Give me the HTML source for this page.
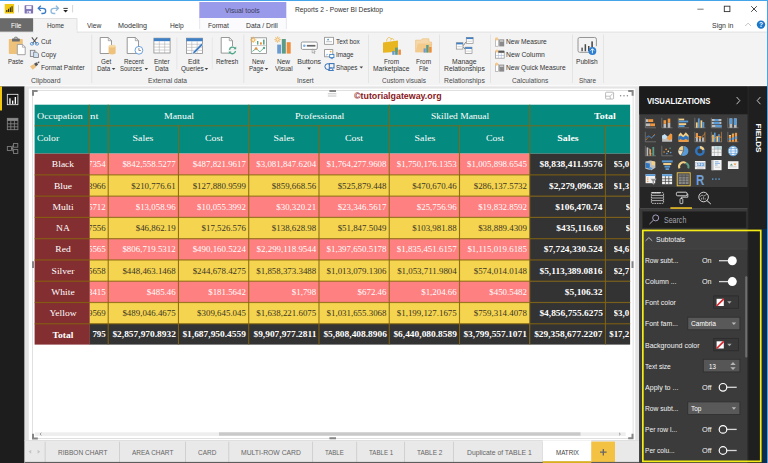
<!DOCTYPE html>
<html lang="en"><head><meta charset="utf-8"><title>Reports 2 - Power BI Desktop</title>
<style>
html,body{margin:0;padding:0}
body{width:768px;height:463px;overflow:hidden;background:#fff;position:relative;font-family:"Liberation Sans",sans-serif}
.r{position:absolute;display:block}
.t{position:absolute;white-space:nowrap;display:block}
.s{font-family:"Liberation Sans",sans-serif}
.f{font-family:"Liberation Serif",serif}
.d{font-family:"DejaVu Sans","Liberation Sans",sans-serif}
</style></head><body>
<svg class="r" style="left:0;top:0" width="768" height="463" viewBox="0 0 768 463"><rect x="0.00" y="0.00" width="768.00" height="463.00" fill="#ffffff"/><rect x="0.00" y="0.00" width="768.00" height="1.00" fill="#45a4ea"/><rect x="199.30" y="2.00" width="87.00" height="16.00" fill="#9a9aea"/><rect x="199.30" y="18.00" width="87.30" height="14.00" fill="#fbfbfe"/><rect x="199.30" y="18.00" width="0.80" height="11.00" fill="#e1e1e8"/><rect x="285.90" y="18.00" width="0.80" height="11.00" fill="#e1e1e8"/><rect x="0.00" y="18.20" width="33.00" height="13.80" fill="#6a6a6a"/><rect x="0.00" y="32.00" width="767.00" height="55.00" fill="#f3f3f4"/><rect x="0.00" y="31.60" width="767.00" height="0.90" fill="#dedede"/><rect x="33.40" y="18.60" width="43.60" height="13.60" fill="#f3f3f4" stroke="#dadada" stroke-width="0.8"/><rect x="33.60" y="30.00" width="43.20" height="3.00" fill="#f3f3f4"/><rect x="0.00" y="85.00" width="767.00" height="1.60" fill="#fafafa"/><rect x="91.30" y="34.50" width="0.90" height="48.50" fill="#e1e2e3"/><rect x="243.40" y="34.50" width="0.90" height="48.50" fill="#e1e2e3"/><rect x="368.00" y="34.50" width="0.90" height="48.50" fill="#e1e2e3"/><rect x="439.00" y="34.50" width="0.90" height="48.50" fill="#e1e2e3"/><rect x="490.00" y="34.50" width="0.90" height="48.50" fill="#e1e2e3"/><rect x="572.00" y="34.50" width="0.90" height="48.50" fill="#e1e2e3"/><rect x="603.00" y="34.50" width="0.90" height="48.50" fill="#e1e2e3"/><rect x="176.40" y="37.50" width="0.90" height="32.00" fill="#e4e5e6"/><rect x="211.80" y="37.50" width="0.90" height="32.00" fill="#e4e5e6"/><rect x="4.7" y="4" width="9.4" height="9.5" fill="#f2c811"/><rect x="6.3" y="10.0" width="1.1" height="2.0" fill="#2e2a10"/><rect x="8.0" y="8.8" width="1.1" height="3.2" fill="#2e2a10"/><rect x="9.8" y="7.4" width="1.1" height="4.6" fill="#2e2a10"/><rect x="11.5" y="6.2" width="1.1" height="5.8" fill="#2e2a10"/><path d="M18.5 5v7.4M72.6 5v7.4" stroke="#c9c9c9" stroke-width="0.8"/><rect x="24.6" y="5.2" width="8.5" height="8.3" rx="0.6" fill="#7d70b4"/><rect x="26.2" y="5.9" width="5.3" height="3.2" fill="#f4f2fb"/><rect x="26.8" y="10.9" width="4.1" height="2.6" fill="#e9e6f5"/><rect x="27.6" y="11.4" width="1.2" height="1.6" fill="#7d70b4"/><path d="M40.8 5.7L38.2 8.3L40.8 10.9M38.4 8.3h4.3a3 2.6 0 0 1 0 5.2h-1.3" fill="none" stroke="#3b7bc6" stroke-width="1.3"/><path d="M55.9 5.7L58.5 8.3L55.9 10.9M58.3 8.3h-4.3a3 2.6 0 0 0 0 5.2h1.3" fill="none" stroke="#8fb9da" stroke-width="1.3"/><path d="M63.4 8.4h4.4" stroke="#222" stroke-width="0.9"/><path d="M63.3 9.9h4.6l-2.3 2.5z" fill="#222"/><path d="M697.4 9.2h6.2" stroke="#777" stroke-width="1"/><rect x="724.3" y="6.2" width="5.6" height="5.4" fill="none" stroke="#333" stroke-width="0.9"/><path d="M751.2 6.2l5.6 5.6M756.8 6.2l-5.6 5.6" stroke="#333" stroke-width="0.9"/><path d="M745.2 26l2.9-2.9l2.9 2.9" fill="none" stroke="#bdbdbd" stroke-width="0.9"/><circle cx="761" cy="24.6" r="4.2" fill="#1b77c9"/><path d="M111.8 67.9h3.6l-1.8 2.1z" fill="#444"/><path d="M144.5 67.9h3.6l-1.8 2.1z" fill="#444"/><path d="M204.6 67.9h3.6l-1.8 2.1z" fill="#444"/><path d="M264.7 67.9h3.6l-1.8 2.1z" fill="#444"/><path d="M307.3 67.6h3.6l-1.8 2.1z" fill="#444"/><path d="M359.5 66.4h3.6l-1.8 2.1z" fill="#444"/><rect x="8.8" y="39" width="14" height="15" rx="0.8" fill="#efc27c"/><rect x="12" y="38.6" width="7.8" height="2.9" rx="0.6" fill="#6b6b6b"/><path d="M14.2 38.6a1.7 1.5 0 0 1 3.4 0" fill="none" stroke="#6b6b6b" stroke-width="0.9"/><path d="M17.3 44.4h5.3l2.6 2.6v7.7h-7.9z" fill="#fff" stroke="#9a9a9a" stroke-width="0.9"/><path d="M22.4 44.4v2.8h2.8" fill="none" stroke="#9a9a9a" stroke-width="0.7"/><path d="M31.8 37.3l4.8 6.2M37.3 37.3l-4.8 6.2" stroke="#555" stroke-width="1.1" fill="none"/><ellipse cx="32" cy="43.8" rx="1.7" ry="1.3" fill="none" stroke="#4a8bd0" stroke-width="0.9"/><ellipse cx="37" cy="43.8" rx="1.7" ry="1.3" fill="none" stroke="#4a8bd0" stroke-width="0.9"/><rect x="30.3" y="50.3" width="4.6" height="6.2" fill="#dfeaf6" stroke="#7a7a7a" stroke-width="0.8"/><path d="M33.6 52.2h3.2l1.7 1.7v3.6h-4.9z" fill="#cfe1f4" stroke="#7a7a7a" stroke-width="0.8"/><path d="M30 66.3l4-2.2l2 3l-3.3 2.6z" fill="#efc27c"/><path d="M34 63.8l2.6-1.5l1.6 2.3l-2.3 1.8z" fill="#555"/><path d="M37.7 63l1.6-1.2" stroke="#555" stroke-width="1.2"/><path d="M100.2 37.5h8.100000000000001l3.2 3.2v12.8h-11.3z" fill="#fff" stroke="#8c8c8c" stroke-width="0.9"/><path d="M108.3 37.5v3.2h3.2" fill="none" stroke="#8c8c8c" stroke-width="0.7"/><path d="M108.6 46.2v6.8a3.5 1.4 0 0 0 7 0v-6.8z" fill="#efc27c"/><ellipse cx="112.1" cy="46.2" rx="3.5" ry="1.4" fill="#f7d9a6"/><path d="M127.2 37.5h8.100000000000001l3.2 3.2v12.8h-11.3z" fill="#fff" stroke="#8c8c8c" stroke-width="0.9"/><path d="M135.3 37.5v3.2h3.2" fill="none" stroke="#8c8c8c" stroke-width="0.7"/><circle cx="138.9" cy="50.3" r="3.9" fill="#fff" stroke="#5b95d6" stroke-width="0.9"/><path d="M138.9 48v2.5h2" fill="none" stroke="#666" stroke-width="0.7"/><rect x="153.9" y="38.2" width="16.2" height="14.8" fill="#fff" stroke="#8c8c8c" stroke-width="0.8"/><rect x="153.9" y="38.2" width="16.2" height="2.96" fill="#3f7fc4"/><path d="M159.30 41.16v11.84" stroke="#b0b0b0" stroke-width="0.6"/><path d="M164.70 41.16v11.84" stroke="#b0b0b0" stroke-width="0.6"/><path d="M153.9 44.12h16.2" stroke="#b0b0b0" stroke-width="0.6"/><path d="M153.9 47.08h16.2" stroke="#b0b0b0" stroke-width="0.6"/><path d="M153.9 50.04h16.2" stroke="#b0b0b0" stroke-width="0.6"/><rect x="186.4" y="38.2" width="16.2" height="15.2" fill="#fff" stroke="#8c8c8c" stroke-width="0.8"/><rect x="186.4" y="38.2" width="16.2" height="3.04" fill="#3f7fc4"/><path d="M191.80 41.24v12.16" stroke="#b0b0b0" stroke-width="0.6"/><path d="M197.20 41.24v12.16" stroke="#b0b0b0" stroke-width="0.6"/><path d="M186.4 44.28h16.2" stroke="#b0b0b0" stroke-width="0.6"/><path d="M186.4 47.32h16.2" stroke="#b0b0b0" stroke-width="0.6"/><path d="M186.4 50.36h16.2" stroke="#b0b0b0" stroke-width="0.6"/><path d="M192.2 54.3l1-2.6l8.2-8.4l1.6 1.6l-8.2 8.4z" fill="#3f7fc4" stroke="#f3f3f4" stroke-width="0.5"/><path d="M221.2 37.5h8.100000000000001l3.2 3.2v12.399999999999999h-11.3z" fill="#fff" stroke="#8c8c8c" stroke-width="0.9"/><path d="M229.3 37.5v3.2h3.2" fill="none" stroke="#8c8c8c" stroke-width="0.7"/><circle cx="232.5" cy="50.4" r="4.3" fill="#f3f3f4"/><path d="M229.5 49.8a3.1 3.1 0 0 1 5.6 -1.4M235.5 51a3.1 3.1 0 0 1 -5.6 1.4" fill="none" stroke="#4ea585" stroke-width="1.3"/><path d="M236.2 46.6v2.6h-2.6zM228.8 54.2v-2.6h2.6z" fill="#4ea585"/><rect x="251.3" y="37.8" width="15.2" height="15.6" fill="#fff" stroke="#8c8c8c" stroke-width="0.8"/><path d="M251.3 45.6h15.2" stroke="#aaa" stroke-width="0.6"/><rect x="257" y="41" width="1.4" height="3.6" fill="#5aa88a"/><rect x="260" y="42.3" width="1.8" height="2.3" fill="#ee8e3c"/><rect x="263" y="39.6" width="1.6" height="5" fill="#5aa88a"/><path d="M252.3 51.5l3.8-3l3.8 3.4l4-4" fill="none" stroke="#5aa88a" stroke-width="0.9"/><circle cx="256.1" cy="48.6" r="1.3" fill="#ee8e3c"/><circle cx="264" cy="48" r="1.2" fill="#5aa88a"/><circle cx="253.2" cy="39.9" r="1.7" fill="#fbe9c8" stroke="#e9a73f" stroke-width="0.8"/><path d="M250.0 39.9h1M255.39999999999998 39.9h1M253.2 36.699999999999996v1M253.2 42.1v1M250.89999999999998 37.6l0.7 0.7M254.79999999999998 41.5l0.7 0.7M250.89999999999998 42.199999999999996l0.7 -0.7M254.79999999999998 38.3l0.7 -0.7" stroke="#e9a73f" stroke-width="0.7"/><rect x="277.2" y="44.6" width="3.8" height="9" fill="#6c9bd2"/><rect x="281.8" y="39" width="4" height="14.6" fill="#5a9c85"/><rect x="286.7" y="42.2" width="4" height="11.4" fill="#ee8e3c"/><circle cx="277.6" cy="39.6" r="1.7" fill="#fbe9c8" stroke="#e9a73f" stroke-width="0.8"/><path d="M274.40000000000003 39.6h1M279.8 39.6h1M277.6 36.4v1M277.6 41.800000000000004v1M275.3 37.300000000000004l0.7 0.7M279.20000000000005 41.2l0.7 0.7M275.3 41.9l0.7 -0.7M279.20000000000005 38.0l0.7 -0.7" stroke="#e9a73f" stroke-width="0.7"/><rect x="301.3" y="42" width="16" height="7.4" rx="1.3" fill="#fff" stroke="#8c8c8c" stroke-width="0.9"/><circle cx="304.3" cy="45.7" r="1.3" fill="#7fb0e4"/><rect x="306.8" y="44.9" width="8.6" height="1.7" fill="#666"/><path d="M312.2 49l0 4l1-0.9l0.9 1.6l0.8-0.5l-0.9-1.5l1.3-0.2z" fill="#fff" stroke="#777" stroke-width="0.5"/><rect x="324.6" y="37.3" width="8.8" height="7" fill="#fff" stroke="#8c8c8c" stroke-width="0.8"/><path d="M326 41.7h6" stroke="#999" stroke-width="0.6"/><path d="M326.8 40.2l1.3-1.6l1.3 1.6z" fill="#3f7fc4"/><rect x="324.6" y="49.6" width="8.2" height="7.2" fill="#fff" stroke="#8c8c8c" stroke-width="0.8"/><circle cx="330.6" cy="51.6" r="0.9" fill="#efb24a"/><path d="M325.4 55.8l1.6-2.4l1.4 1.4" fill="#9fc3e8"/><rect x="329.7" y="54.4" width="4.2" height="3.2" fill="#fff" stroke="#3f7fc4" stroke-width="0.9"/><path d="M330.6 58.6h2.5" stroke="#3f7fc4" stroke-width="0.8"/><circle cx="327.8" cy="66.6" r="2.9" fill="none" stroke="#2f6db5" stroke-width="1"/><rect x="329.3" y="63.6" width="4.7" height="4.4" fill="#f3f3f4" stroke="#2f6db5" stroke-width="1"/><path d="M328.5 70.5l2.5-3l2.6 3z" fill="#f3f3f4" stroke="#2f6db5" stroke-width="0.9"/><path d="M386.6 41.5c0-3.6 2.4-4.6 3.8-3.6c1 0.8 0.8 2 0.2 2.6M391 38.8c1.6-0.6 2.8 0.2 3 1.6" fill="none" stroke="#e8b93a" stroke-width="0.8"/><path d="M383 42.6l15-2v11.2l-15 1z" fill="#e7b621"/><rect x="392.2" y="51" width="2.4" height="3.8" fill="#6c9bd2"/><rect x="395.1" y="47.6" width="2.7" height="7.2" fill="#5a9c85"/><rect x="398.3" y="49.6" width="2.6" height="5.2" fill="#ee8e3c"/><path d="M415.6 40.2h5.5l1.2-1.4h6.6v3.2h2.6v10h-15.9z" fill="#f6d9ab" stroke="#efc27c" stroke-width="0.7"/><path d="M415.7 52l2-8.4h14.6l-2 8.4z" fill="#f3c98c"/><rect x="423.6" y="48.4" width="2.2" height="4.2" fill="#6c9bd2"/><rect x="426.2" y="45" width="2.4" height="7.6" fill="#5a9c85"/><rect x="429.1" y="47" width="2.4" height="5.6" fill="#ee8e3c"/><path d="M463 45.8l3.6-4.4M463 46.6l2.6 3.2" stroke="#666" stroke-width="0.8"/><rect x="456.3" y="42.7" width="6.6" height="6.4" fill="#fff" stroke="#8c8c8c" stroke-width="0.7"/><rect x="456.3" y="42.7" width="6.6" height="1.7" fill="#3f7fc4"/><path d="M457.3 46.67h4.6" stroke="#aaa" stroke-width="0.5"/><rect x="466.3" y="37.4" width="6.8" height="6.2" fill="#fff" stroke="#8c8c8c" stroke-width="0.7"/><rect x="466.3" y="37.4" width="6.8" height="1.7" fill="#3f7fc4"/><path d="M467.3 41.24h4.8" stroke="#aaa" stroke-width="0.5"/><rect x="465.2" y="47.2" width="6.8" height="6.4" fill="#fff" stroke="#8c8c8c" stroke-width="0.7"/><rect x="465.2" y="47.2" width="6.8" height="1.7" fill="#3f7fc4"/><path d="M466.2 51.17h4.8" stroke="#aaa" stroke-width="0.5"/><rect x="495.6" y="39.2" width="3" height="7" fill="#fff" stroke="#999" stroke-width="0.6"/><rect x="499.2" y="39.4" width="5" height="7" fill="#8a8a8a"/><rect x="500" y="40.2" width="3.4" height="1.6" fill="#c9c9c9"/><circle cx="496.6" cy="38.9" r="1.6" fill="#f6c98a"/><rect x="495.6" y="64.4" width="3" height="7" fill="#fff" stroke="#999" stroke-width="0.6"/><rect x="499.2" y="64.60000000000001" width="5" height="7" fill="#8a8a8a"/><rect x="500" y="65.4" width="3.4" height="1.6" fill="#c9c9c9"/><circle cx="496.6" cy="64.10000000000001" r="1.6" fill="#f6c98a"/><rect x="495.6" y="51.4" width="8.6" height="6.8" fill="#fff" stroke="#8c8c8c" stroke-width="0.7"/><rect x="498.2" y="50.6" width="6" height="2.2" fill="#555"/><path d="M498.4 53v5M501.3 53v5M495.6 55.5h8.6" stroke="#9ac" stroke-width="0.5"/><circle cx="496.8" cy="51" r="1.6" fill="#f6c98a"/><path d="M590 52.3h-10.3a1.7 1.7 0 0 1-1.7-1.7v-11.4a1.7 1.7 0 0 1 1.7-1.7h15a1.7 1.7 0 0 1 1.7 1.7v7" fill="none" stroke="#8a8a8a" stroke-width="0.9"/><rect x="581.4" y="47.6" width="1.4" height="3.6" fill="#4a4a4a"/><rect x="584.6" y="44.2" width="1.5" height="7" fill="#4a4a4a"/><rect x="588" y="46" width="1.5" height="5.2" fill="#4a4a4a"/><rect x="591.3" y="41.4" width="1.6" height="6" fill="#4a4a4a"/><circle cx="592.4" cy="51" r="3.9" fill="#2f7fd0"/><path d="M592.4 53.3v-4.3M590.6 50.6l1.8-1.9l1.8 1.9" fill="none" stroke="#fff" stroke-width="0.9"/><rect x="0.00" y="86.40" width="24.60" height="376.60" fill="#1d1d1d"/><rect x="0.00" y="86.40" width="2.00" height="24.10" fill="#f2c811"/><rect x="24.60" y="86.50" width="614.70" height="353.50" fill="#e4e4e4"/><rect x="28.80" y="88.60" width="606.40" height="351.40" fill="#ffffff"/><rect x="32.40" y="90.40" width="600.70" height="348.20" fill="#ffffff" stroke="#d9d9d9" stroke-width="0.8"/><rect x="34.60" y="104.70" width="595.50" height="48.90" fill="#048a7e"/><rect x="89.30" y="153.60" width="440.46" height="21.57" fill="#fe8080"/><rect x="529.76" y="153.60" width="100.34" height="21.57" fill="#333333"/><rect x="89.30" y="174.87" width="440.46" height="21.57" fill="#f5d44f"/><rect x="529.76" y="174.87" width="100.34" height="21.57" fill="#333333"/><rect x="89.30" y="196.14" width="440.46" height="21.57" fill="#fe8080"/><rect x="529.76" y="196.14" width="100.34" height="21.57" fill="#333333"/><rect x="89.30" y="217.41" width="440.46" height="21.57" fill="#f5d44f"/><rect x="529.76" y="217.41" width="100.34" height="21.57" fill="#333333"/><rect x="89.30" y="238.68" width="440.46" height="21.57" fill="#fe8080"/><rect x="529.76" y="238.68" width="100.34" height="21.57" fill="#333333"/><rect x="89.30" y="259.95" width="440.46" height="21.57" fill="#f5d44f"/><rect x="529.76" y="259.95" width="100.34" height="21.57" fill="#333333"/><rect x="89.30" y="281.22" width="440.46" height="21.57" fill="#fe8080"/><rect x="529.76" y="281.22" width="100.34" height="21.57" fill="#333333"/><rect x="89.30" y="302.49" width="440.46" height="21.57" fill="#f5d44f"/><rect x="529.76" y="302.49" width="100.34" height="21.57" fill="#333333"/><rect x="89.30" y="323.76" width="440.46" height="20.84" fill="#333333"/><rect x="529.76" y="323.76" width="100.34" height="20.84" fill="#333333"/><rect x="34.60" y="153.60" width="55.10" height="191.00" fill="#832e30"/><rect x="88.75" y="104.70" width="1.10" height="48.90" fill="#86650f" opacity="0.9"/><rect x="107.65" y="104.70" width="1.10" height="239.90" fill="#86650f" opacity="0.9"/><rect x="177.91" y="125.75" width="1.10" height="218.85" fill="#86650f" opacity="0.9"/><rect x="248.17" y="104.70" width="1.10" height="239.90" fill="#86650f" opacity="0.9"/><rect x="318.43" y="125.75" width="1.10" height="218.85" fill="#86650f" opacity="0.9"/><rect x="388.69" y="104.70" width="1.10" height="239.90" fill="#86650f" opacity="0.9"/><rect x="458.95" y="125.75" width="1.10" height="218.85" fill="#86650f" opacity="0.9"/><rect x="529.21" y="104.70" width="1.10" height="239.90" fill="#86650f" opacity="0.9"/><rect x="604.85" y="125.75" width="1.10" height="218.85" fill="#86650f" opacity="0.9"/><rect x="34.60" y="125.15" width="595.50" height="1.20" fill="#86650f" opacity="0.7"/><rect x="34.60" y="174.27" width="595.50" height="1.20" fill="#86650f" opacity="0.8"/><rect x="34.60" y="195.54" width="595.50" height="1.20" fill="#86650f" opacity="0.8"/><rect x="34.60" y="216.81" width="595.50" height="1.20" fill="#86650f" opacity="0.8"/><rect x="34.60" y="238.08" width="595.50" height="1.20" fill="#86650f" opacity="0.8"/><rect x="34.60" y="259.35" width="595.50" height="1.20" fill="#86650f" opacity="0.8"/><rect x="34.60" y="280.62" width="595.50" height="1.20" fill="#86650f" opacity="0.8"/><rect x="34.60" y="301.89" width="595.50" height="1.20" fill="#86650f" opacity="0.8"/><rect x="34.60" y="323.16" width="595.50" height="1.20" fill="#86650f" opacity="0.8"/><rect x="34.70" y="432.30" width="591.00" height="3.60" fill="#eeeeee"/><rect x="219.00" y="432.30" width="361.50" height="3.40" fill="#c9c9c9"/><rect x="24.60" y="440.00" width="614.70" height="23.00" fill="#e9e9e9"/><rect x="24.60" y="440.00" width="614.70" height="0.80" fill="#dcdcdc"/><rect x="44.70" y="441.70" width="0.90" height="21.30" fill="#cdcdcd"/><rect x="119.05" y="441.70" width="0.90" height="21.30" fill="#cdcdcd"/><rect x="185.05" y="441.70" width="0.90" height="21.30" fill="#cdcdcd"/><rect x="228.35" y="441.70" width="0.90" height="21.30" fill="#cdcdcd"/><rect x="312.15" y="441.70" width="0.90" height="21.30" fill="#cdcdcd"/><rect x="356.25" y="441.70" width="0.90" height="21.30" fill="#cdcdcd"/><rect x="404.15" y="441.70" width="0.90" height="21.30" fill="#cdcdcd"/><rect x="452.95" y="441.70" width="0.90" height="21.30" fill="#cdcdcd"/><rect x="542.15" y="441.70" width="0.90" height="21.30" fill="#cdcdcd"/><rect x="542.70" y="440.40" width="48.60" height="22.60" fill="#ffffff"/><rect x="591.30" y="441.60" width="23.70" height="21.40" fill="#f4c243"/><rect x="24.60" y="461.90" width="614.70" height="1.10" fill="#5c5c5c"/><rect x="542.70" y="461.20" width="48.60" height="1.80" fill="#d9ae1f"/><rect x="7.3" y="94.3" width="10.6" height="10.4" fill="none" stroke="#f5f5f5" stroke-width="0.8"/><rect x="8" y="95" width="9.2" height="1.6" fill="#111"/><rect x="9.3" y="98.3" width="1.3" height="5.6" fill="#fff"/><rect x="12" y="100.6" width="1.3" height="3.3" fill="#fff"/><rect x="14.7" y="97" width="1.3" height="6.9" fill="#fff"/><rect x="7.3" y="118.3" width="10.6" height="11.4" fill="none" stroke="#8a8a8a" stroke-width="0.8"/><rect x="7.3" y="118.3" width="10.6" height="2.6" fill="#8a8a8a"/><path d="M10.8 120.9v8.8M14.4 120.9v8.8M7.3 123.8h10.6M7.3 126.8h10.6" stroke="#8a8a8a" stroke-width="0.8"/><rect x="7.3" y="146.6" width="4.2" height="3.8" fill="none" stroke="#8a8a8a" stroke-width="0.8"/><rect x="13.4" y="143.6" width="4.4" height="3.6" fill="none" stroke="#8a8a8a" stroke-width="0.8"/><rect x="13.4" y="149.6" width="4.4" height="3.8" fill="none" stroke="#8a8a8a" stroke-width="0.8"/><path d="M11.5 148.5h1.9M12.5 145.4v6" stroke="#8a8a8a" stroke-width="0.7" fill="none"/><path d="M33 95.8V91H37.6M628.2 91H632.6V95.8M33 433.8V438.4H37.8M628.2 438.3H632.5V433.8" fill="none" stroke="#858585" stroke-width="2"/><path d="M329.4 91h6.6M329.4 438.3h6.6M33 261.3v6.6M632.5 261.3v6.6" stroke="#858585" stroke-width="2"/><path d="M327.8 93.8h8.6M327.8 96h8.6" stroke="#b5b5b5" stroke-width="0.8"/><rect x="605.6" y="92.2" width="8" height="6.8" rx="0.8" fill="none" stroke="#a8a8a8" stroke-width="0.8"/><path d="M605.6 96.2h4.6v2.8M610.4 96l2.2-2.4" fill="none" stroke="#a8a8a8" stroke-width="0.7"/><circle cx="620.6" cy="95.8" r="0.75" fill="#888"/><circle cx="624" cy="95.8" r="0.75" fill="#888"/><circle cx="627.4" cy="95.8" r="0.75" fill="#888"/><path d="M41.4 432.8l-1.4 1.3l1.4 1.3M619 432.8l1.4 1.3l-1.4 1.3" fill="none" stroke="#777" stroke-width="0.7"/><path d="M31.2 449.8l-2.6 2l2.6 2zM37.6 449.8l2.6 2l-2.6 2z" fill="#c4c4c4"/><path d="M600 452.2h6.6M603.3 448.9v6.6" stroke="#666" stroke-width="1.3"/><rect x="639.30" y="86.40" width="128.00" height="376.60" fill="#1f1f1f"/><rect x="639.30" y="86.40" width="108.40" height="28.00" fill="#1c1c1c"/><rect x="640.00" y="114.30" width="107.70" height="72.70" fill="#3c3c3c"/><rect x="640.00" y="187.00" width="107.70" height="21.30" fill="#252525"/><rect x="639.30" y="208.30" width="108.40" height="254.70" fill="#3b3b3b"/><rect x="640.00" y="208.00" width="107.70" height="0.90" fill="#4a4a4a"/><rect x="670.40" y="207.20" width="21.60" height="1.70" fill="#e3b825"/><rect x="642.60" y="211.60" width="103.60" height="16.40" fill="#1e1e1e" stroke="#2a2a2a" stroke-width="0.6"/><rect x="639.30" y="230.00" width="108.40" height="18.70" fill="#404040"/><rect x="639.30" y="248.60" width="108.40" height="0.80" fill="#4a4a4a"/><rect x="719.00" y="260.05" width="14.00" height="1.30" fill="#d8d8d8"/><circle cx="732.3" cy="260.70" r="4.5" fill="#fff"/><rect x="719.00" y="280.95" width="14.00" height="1.30" fill="#d8d8d8"/><circle cx="732.3" cy="281.60" r="4.5" fill="#fff"/><rect x="713.70" y="295.90" width="24.80" height="12.40" fill="#383838" stroke="#2b2b2b" stroke-width="0.8"/><rect x="716.60" y="298.80" width="7.20" height="7.20" fill="#fff"/><path d="M716.6 306.00L723.8 298.80" fill="none" stroke="#d8262c" stroke-width="1.7" /><path d="M727.2 301.20h4.4l-2.2 2.6z" fill="#aaa" /><rect x="687.80" y="317.20" width="52.10" height="12.60" fill="#595959" stroke="#2e2e2e" stroke-width="0.8"/><path d="M731.7 322.50h4.4l-2.2 2.6z" fill="#bbb" /><rect x="713.70" y="338.40" width="24.80" height="12.40" fill="#383838" stroke="#2b2b2b" stroke-width="0.8"/><rect x="716.60" y="341.30" width="7.20" height="7.20" fill="#fff"/><path d="M716.6 348.50L723.8 341.30" fill="none" stroke="#d8262c" stroke-width="1.7" /><path d="M727.2 343.70h4.4l-2.2 2.6z" fill="#aaa" /><rect x="703.30" y="359.30" width="36.60" height="12.60" fill="#565656" stroke="#2e2e2e" stroke-width="0.8"/><path d="M730.3 364.90l2.7 -2.8l2.7 2.8z M730.3 367.30l2.7 2.8l2.7 -2.8z" fill="#b4b4b4" /><rect x="723.00" y="386.65" width="13.70" height="1.30" fill="#d8d8d8"/><circle cx="723" cy="387.30" r="3.8" fill="#3b3b3b" stroke="#fff" stroke-width="1.2"/><rect x="687.80" y="401.90" width="52.10" height="12.60" fill="#595959" stroke="#2e2e2e" stroke-width="0.8"/><path d="M731.7 407.20h4.4l-2.2 2.6z" fill="#bbb" /><rect x="723.00" y="428.75" width="13.70" height="1.30" fill="#d8d8d8"/><circle cx="723" cy="429.40" r="3.8" fill="#3b3b3b" stroke="#fff" stroke-width="1.2"/><rect x="723.00" y="449.85" width="13.70" height="1.30" fill="#d8d8d8"/><circle cx="723" cy="450.50" r="3.8" fill="#3b3b3b" stroke="#fff" stroke-width="1.2"/><rect x="745.20" y="276.30" width="2.30" height="81.30" fill="#6e6e6e" rx="1"/><rect x="747.70" y="86.40" width="1.00" height="376.60" fill="#2b2b2b"/><rect x="748.70" y="86.40" width="18.50" height="376.60" fill="#1f1f1f"/><rect x="761.50" y="229.00" width="5.70" height="234.00" fill="#0d2d4d"/><path d="M645.3 117.8v10h10.7" fill="none" stroke="#8a8a8a" stroke-width="0.6"/><rect x="645.80" y="119.20" width="2.40" height="2.80" fill="#bdbdbd"/><rect x="648.20" y="119.20" width="5.00" height="2.80" fill="#f0963c"/><rect x="645.80" y="123.40" width="4.40" height="2.80" fill="#bdbdbd"/><rect x="650.20" y="123.40" width="4.80" height="2.80" fill="#f0963c"/><path d="M661.8 117.8v10h10.7" fill="none" stroke="#8a8a8a" stroke-width="0.6"/><rect x="663.50" y="123.80" width="2.60" height="4.00" fill="#bdbdbd"/><rect x="663.50" y="120.20" width="2.60" height="3.60" fill="#f0963c"/><rect x="667.70" y="122.80" width="2.60" height="5.00" fill="#bdbdbd"/><rect x="667.70" y="118.60" width="2.60" height="4.20" fill="#f0963c"/><path d="M678.3 117.8v10h10.7" fill="none" stroke="#8a8a8a" stroke-width="0.6"/><rect x="678.80" y="118.60" width="5.40" height="1.80" fill="#f3cf85"/><rect x="678.80" y="120.60" width="9.40" height="1.80" fill="#5b9bd5"/><rect x="678.80" y="123.20" width="7.40" height="1.80" fill="#f3cf85"/><rect x="678.80" y="125.20" width="5.80" height="1.80" fill="#5b9bd5"/><path d="M694.8 117.8v10h10.7" fill="none" stroke="#8a8a8a" stroke-width="0.6"/><rect x="695.90" y="122.40" width="1.80" height="5.40" fill="#f3cf85"/><rect x="697.90" y="118.40" width="1.80" height="9.40" fill="#5b9bd5"/><rect x="700.50" y="120.40" width="1.80" height="7.40" fill="#f3cf85"/><rect x="702.50" y="122.00" width="1.80" height="5.80" fill="#5b9bd5"/><path d="M711.3 117.8v10h10.7" fill="none" stroke="#8a8a8a" stroke-width="0.6"/><rect x="711.80" y="119.00" width="9.60" height="2.20" fill="#bdbdbd"/><rect x="714.60" y="119.00" width="4.00" height="2.20" fill="#5b9bd5"/><rect x="711.80" y="122.00" width="9.60" height="2.20" fill="#bdbdbd"/><rect x="713.60" y="122.00" width="6.00" height="2.20" fill="#5b9bd5"/><rect x="711.80" y="125.00" width="9.60" height="2.20" fill="#bdbdbd"/><rect x="715.20" y="125.00" width="6.20" height="2.20" fill="#5b9bd5"/><path d="M727.8 117.8v10h10.7" fill="none" stroke="#8a8a8a" stroke-width="0.6"/><rect x="729.50" y="118.40" width="2.80" height="9.40" fill="#bdbdbd"/><rect x="729.50" y="118.40" width="2.80" height="5.60" fill="#5b9bd5"/><rect x="733.90" y="118.40" width="2.80" height="9.40" fill="#bdbdbd"/><rect x="733.90" y="118.40" width="2.80" height="6.60" fill="#5b9bd5"/><path d="M645.3 131.8v10h10.7" fill="none" stroke="#8a8a8a" stroke-width="0.6"/><path d="M646 139.8l3-3.4l2.4 1.6l3.6-4" fill="none" stroke="#f0963c" stroke-width="0.9" stroke-dasharray="1.2 0.5"/><path d="M646 137.4l2.6-1.6l3 2l3.4-2.6" fill="none" stroke="#2f75c0" stroke-width="0.9"/><path d="M662.1 141.8v-6l2.6-1.6l3 2.6l3-3.4l1.4 1v7.4z" fill="#bdbdbd"/><path d="M662.1 135.8l2.6-1.6l3 2.6l-2 2.2l-3.6-0.6z" fill="#bfe0f5"/><path d="M667.7 136.8l3-3.4l1.4 1v4.6l-3 1.4l-2.4-2.4z" fill="#f0963c"/><path d="M678.6 141.8v-7l2-2.2l2.6 2.6l2.6-3l2.8 3v6.6z" fill="#f3cf85"/><path d="M678.6 140.20000000000002v-3.4l2-1.4l2.6 1.8l2.6-2l2.8 2v3z" fill="#2f75c0"/><path d="M678.6 141.8v-1.6l2-1.2l2.6 1.4l2.6-1.6l2.8 1.6v1.4z" fill="#f0963c"/><rect x="695.90" y="133.20" width="2.00" height="8.60" fill="#bdbdbd"/><rect x="695.90" y="133.20" width="2.00" height="4.00" fill="#f0963c"/><rect x="698.90" y="136.20" width="2.00" height="5.60" fill="#bdbdbd"/><rect x="698.90" y="136.20" width="2.00" height="2.60" fill="#f0963c"/><rect x="702.10" y="137.40" width="1.80" height="4.40" fill="#bdbdbd"/><path d="M694.9 137.8l3-1.6l3 1.4l4.2-4" fill="none" stroke="#f0963c" stroke-width="0.7"/><path d="M704.9 131.8v10" stroke="#f0963c" stroke-width="0.6"/><path d="M694.8 131.8v10h10.7" fill="none" stroke="#8a8a8a" stroke-width="0.6"/><path d="M711.3 131.8v10h10.7" fill="none" stroke="#8a8a8a" stroke-width="0.6"/><rect x="712.20" y="134.80" width="1.60" height="7.00" fill="#f3cf85"/><rect x="714.00" y="132.60" width="1.60" height="9.20" fill="#5b9bd5"/><rect x="716.40" y="136.20" width="1.60" height="5.60" fill="#f3cf85"/><rect x="718.20" y="134.20" width="1.60" height="7.60" fill="#5b9bd5"/><path d="M711.4 136.8l3.4 1.4l3-2l3.6 1.2" fill="none" stroke="#f0963c" stroke-width="0.7"/><path d="M721.4 131.8v10" stroke="#f0963c" stroke-width="0.6"/><path d="M727.8 131.8v10h10.7" fill="none" stroke="#8a8a8a" stroke-width="0.6"/><rect x="728.90" y="135.80" width="2.20" height="6.00" fill="#f0963c"/><rect x="728.90" y="138.20" width="2.20" height="2.00" fill="#5b9bd5"/><rect x="731.90" y="134.40" width="2.20" height="7.40" fill="#f0963c"/><rect x="731.90" y="137.40" width="2.20" height="2.40" fill="#5b9bd5"/><rect x="734.90" y="132.80" width="2.20" height="9.00" fill="#f0963c"/><rect x="734.90" y="136.40" width="2.20" height="2.60" fill="#5b9bd5"/><rect x="728.90" y="135.00" width="2.20" height="1.00" fill="#f3cf85"/><rect x="731.90" y="133.60" width="2.20" height="1.00" fill="#f3cf85"/><path d="M645.3 145.8v10h10.7" fill="none" stroke="#8a8a8a" stroke-width="0.6"/><rect x="646.60" y="147.40" width="1.60" height="8.40" fill="#bdbdbd"/><rect x="652.40" y="147.00" width="1.80" height="8.80" fill="#5a9c85"/><rect x="649.60" y="149.20" width="1.50" height="6.60" fill="#f0963c"/><path d="M648.2 148.8h1.4v5h2.8" fill="none" stroke="#bdbdbd" stroke-width="0.5"/><path d="M661.8 145.8v10h10.7" fill="none" stroke="#8a8a8a" stroke-width="0.6"/><circle cx="664.1" cy="152.0" r="0.8" fill="#f0963c"/><circle cx="666.1" cy="149.4" r="0.8" fill="#f0963c"/><circle cx="668.3" cy="151.4" r="0.8" fill="#f3cf85"/><circle cx="670.1" cy="148.20000000000002" r="0.8" fill="#5a9c85"/><circle cx="670.7" cy="152.60000000000002" r="0.8" fill="#5b9bd5"/><circle cx="666.9" cy="153.60000000000002" r="0.8" fill="#5b9bd5"/><circle cx="683.4" cy="151.0" r="5" fill="#5b9bd5"/><path d="M683.4 151.0v-5a5 5 0 0 0 -4.9 4z" fill="#f3cf85"/><path d="M683.4 151.0l-4.9 -1a5 5 0 0 0 2.4 5.4z" fill="#f7e3bd"/><path d="M683.4 146.0v5l-2.5 4.4M683.4 151.0l-4.9-1" stroke="#3c3c3c" stroke-width="0.5" fill="none"/><circle cx="699.9" cy="151.0" r="3.7" fill="none" stroke="#2f75c0" stroke-width="2.4"/><path d="M699.9 147.3a3.7 3.7 0 0 1 3.5 2.6" fill="none" stroke="#f3cf85" stroke-width="2.4"/><rect x="711.60" y="146.20" width="10.00" height="9.80" fill="#f2f2f2"/><rect x="714.40" y="146.20" width="7.20" height="3.00" fill="#b9dbe0"/><path d="M714.4 146.20000000000002v9.8M718 146.20000000000002v9.8M711.6 149.20000000000002h10M711.6 152.4h10" stroke="#9a9a9a" stroke-width="0.5"/><circle cx="733.1" cy="151.0" r="4.8" fill="#f5f9ff" stroke="#5b9bd5" stroke-width="0.9"/><ellipse cx="733.1" cy="151.0" rx="2.2" ry="4.8" fill="none" stroke="#5b9bd5" stroke-width="0.7"/><path d="M728.3 151.0h9.6M729.1 148.60000000000002h8M729.1 153.4h8" stroke="#5b9bd5" stroke-width="0.7"/><path d="M645.4 161.4l5-1l5 1.4v6l-4 2.4l-6-1.4z" fill="#bdbdbd"/><path d="M645.4 162.8l4.4 0.6v5l-4-0.6z" fill="#2f75c0"/><path d="M651.4 160.8l3.6 1v4l-3.2-1z" fill="#f3cf85"/><path d="M649.6 166.8l3 1.4l-2 1.8l-2.4-0.8z" fill="#5b9bd5"/><rect x="661.90" y="160.40" width="10.80" height="2.00" fill="#5b9bd5"/><rect x="663.30" y="163.00" width="8.00" height="2.00" fill="#f3cf85"/><rect x="664.50" y="165.60" width="5.60" height="2.00" fill="#5b9bd5"/><rect x="665.50" y="168.20" width="3.60" height="1.80" fill="#5b9bd5"/><path d="M679.4 168.4a4.4 4.4 0 0 1 6.4 -5.4" fill="none" stroke="#f3cf85" stroke-width="2"/><path d="M685.8 163.0a4.4 4.4 0 0 1 2.4 5.4" fill="none" stroke="#5a9c85" stroke-width="2"/><rect x="694.90" y="161.00" width="10.60" height="8.20" fill="#f2f2f2"/><rect x="695.8" y="162.20000000000002" width="8.8" height="4.6" fill="#e4eefb" stroke="#9ab" stroke-width="0.4"/><path d="M696.9 168.10000000000002h6.6" stroke="#999" stroke-width="0.5"/><text x="700.2" y="166.20000000000002" font-family="Liberation Sans, sans-serif" font-size="4.4" font-weight="700" fill="#2f75c0" text-anchor="middle">123</text><rect x="711.60" y="160.00" width="10.00" height="10.20" fill="#f4f4f4"/><rect x="711.60" y="160.00" width="2.00" height="10.20" fill="#bdbdbd"/><path d="M715 161.8h3.6M715 163.4h5M715 165.0h2.6" stroke="#5b9bd5" stroke-width="0.7"/><path d="M715 167.20000000000002h5" stroke="#aaa" stroke-width="0.5"/><rect x="727.90" y="161.20" width="10.60" height="7.80" fill="#f2f2f2"/><path d="M729.9 165.4l1.5-2l1.5 2z" fill="#5a9c85"/><path d="M733.5 163.4h3l-1.5 2z" fill="#f0963c"/><path d="M729.5 166.8h7" stroke="#aaa" stroke-width="0.5"/><rect x="645.60" y="174.20" width="9.60" height="9.00" fill="#f2f2f2"/><rect x="645.60" y="174.20" width="9.60" height="1.80" fill="#5b9bd5"/><path d="M647 178.0h1.4M647 179.8h1.4M647 181.60000000000002h1.4" stroke="#f0963c" stroke-width="0.9"/><path d="M650.4 178.8h5.8l-2.2 2.6v3l-1.4-0.8v-2.2z" fill="#8c8c8c" stroke="#f2f2f2" stroke-width="0.3"/><rect x="662.10" y="174.20" width="10.00" height="10.00" fill="#f4f4f4"/><rect x="662.10" y="174.20" width="10.00" height="2.00" fill="#5b9bd5"/><path d="M665.4 176.20000000000002v8M668.8 176.20000000000002v8M662.1 178.8h10M662.1 181.4h10" stroke="#3c3c3c" stroke-width="0.7"/><rect x="677.2" y="172.8" width="13" height="13" fill="#4a4a4a" stroke="#f2c94c" stroke-width="0.9"/><rect x="678.80" y="174.60" width="9.80" height="9.40" fill="#8a8a8a"/><rect x="678.80" y="174.60" width="9.80" height="2.00" fill="#6f6f6f"/><path d="M682 174.60000000000002v9.4M685.4 174.60000000000002v9.4M678.8 179.0h9.8M678.8 181.60000000000002h9.8M678.8 176.60000000000002h9.8" stroke="#4a4a4a" stroke-width="0.6"/><text x="696.1" y="184.70000000000002" font-family="Liberation Sans, sans-serif" font-size="13.8" font-weight="700" fill="#6f9fd8" textLength="8.3" lengthAdjust="spacingAndGlyphs">R</text><rect x="712.0" y="178.4" width="1.4" height="1.4" fill="#5b9bd5"/><rect x="715.2" y="178.4" width="1.4" height="1.4" fill="#5b9bd5"/><rect x="718.4" y="178.4" width="1.4" height="1.4" fill="#5b9bd5"/><rect x="651.4" y="192.6" width="12.2" height="10.8" rx="0.8" fill="none" stroke="#e6e6e6" stroke-width="0.8" stroke-dasharray="1.6 0.8"/><path d="M651.4 195.4h12.2M651.4 198h12.2M651.4 200.6h12.2" stroke="#e6e6e6" stroke-width="0.7"/><rect x="651.4" y="192.2" width="9" height="1.2" fill="#e6e6e6"/><rect x="676.4" y="192.2" width="10.6" height="3.6" rx="1.2" fill="none" stroke="#e6e6e6" stroke-width="0.9"/><path d="M687 194h0.8v3.2h-6.4v1.6" fill="none" stroke="#e6e6e6" stroke-width="0.8"/><rect x="680" y="198.6" width="2.8" height="5" rx="0.6" fill="none" stroke="#e6e6e6" stroke-width="0.8"/><circle cx="703.6" cy="197" r="4.8" fill="none" stroke="#e6e6e6" stroke-width="0.9"/><path d="M707 200.6l3.8 3.4" stroke="#e6e6e6" stroke-width="1"/><path d="M701.6 199.6v-1.8M703.4 199.6v-2.6M705.2 199.6v-1.4M700 196.6l2-1.6l1.8 1.2l3-2" fill="none" stroke="#e6e6e6" stroke-width="0.6"/><circle cx="655.7" cy="217.9" r="3" fill="none" stroke="#b4acd2" stroke-width="0.9"/><path d="M653.5 220.1l-4 3.9" stroke="#b4a0b4" stroke-width="1"/><path d="M645.6 240.8l3.3-3.2l3.3 3.2" fill="none" stroke="#d9d9d9" stroke-width="0.8"/><path d="M736.6 97l3.2 3.6l-3.2 3.6M760.4 97l-3.2 3.6l3.2 3.6" fill="none" stroke="#d6d6d6" stroke-width="0.9"/><rect x="642.85" y="230.45" width="117.90" height="230.90" fill="none" stroke="#f4ec16" stroke-width="1.7"/><rect x="767.00" y="0.00" width="1.00" height="463.00" fill="#45a4ea"/></svg>
<span class="t s" style="top:21px;font-size:6.6px;line-height:8px;color:#fff;font-weight:700;left:761px;transform:translateX(-50%);transform-origin:center center;">?</span>
<span class="t s" style="top:448px;font-size:7.3px;line-height:9px;color:#444;left:555.7px;transform:scaleX(0.8509);transform-origin:left center;">MATRIX</span>
<span class="t s" style="top:91px;font-size:9px;line-height:11px;color:#8a151a;font-weight:700;left:353.9px;transform:scaleX(0.9844);transform-origin:left center;">©tutorialgateway.org</span>
<span class="t f" style="top:111px;font-size:9.2px;line-height:11px;color:#fff;left:37px;transform:scaleX(1.0765);transform-origin:left center;">Occupation</span>
<span class="t f" style="top:133px;font-size:9.2px;line-height:11px;color:#fff;left:37px;transform:scaleX(1.0603);transform-origin:left center;">Color</span>
<span class="t f" style="top:111px;font-size:9.2px;line-height:11px;color:#fff;left:90.4px;transform:scaleX(1.1738);transform-origin:left center;">nt</span>
<span class="t f" style="top:111px;font-size:9.2px;line-height:11px;color:#fff;left:164px;transform:scaleX(1.0684);transform-origin:left center;">Manual</span>
<span class="t f" style="top:111px;font-size:9.2px;line-height:11px;color:#fff;left:294.5px;transform:scaleX(1.0876);transform-origin:left center;">Professional</span>
<span class="t f" style="top:111px;font-size:9.2px;line-height:11px;color:#fff;left:430.6px;transform:scaleX(1.0318);transform-origin:left center;">Skilled Manual</span>
<span class="t f" style="top:111px;font-size:9.2px;line-height:11px;color:#fff;font-weight:700;left:594.3px;transform:scaleX(1.0849);transform-origin:left center;">Total</span>
<span class="t f" style="top:133px;font-size:9.2px;line-height:11px;color:#fff;left:143.2px;transform:translateX(-50%) scaleX(1.07);transform-origin:center center;">Sales</span>
<span class="t f" style="top:133px;font-size:9.2px;line-height:11px;color:#fff;left:284px;transform:translateX(-50%) scaleX(1.07);transform-origin:center center;">Sales</span>
<span class="t f" style="top:133px;font-size:9.2px;line-height:11px;color:#fff;left:424.8px;transform:translateX(-50%) scaleX(1.07);transform-origin:center center;">Sales</span>
<span class="t f" style="top:133px;font-size:9.2px;line-height:11px;color:#fff;left:213.8px;transform:translateX(-50%) scaleX(1.07);transform-origin:center center;">Cost</span>
<span class="t f" style="top:133px;font-size:9.2px;line-height:11px;color:#fff;left:354.3px;transform:translateX(-50%) scaleX(1.07);transform-origin:center center;">Cost</span>
<span class="t f" style="top:133px;font-size:9.2px;line-height:11px;color:#fff;left:495px;transform:translateX(-50%) scaleX(1.07);transform-origin:center center;">Cost</span>
<span class="t f" style="top:133px;font-size:9.2px;line-height:11px;color:#fff;font-weight:700;left:567.7px;transform:translateX(-50%) scaleX(1.07);transform-origin:center center;">Sales</span>
<span class="t f" style="top:159px;font-size:9.2px;line-height:11px;color:#fff;left:62.9px;transform:translateX(-50%) scaleX(1.04);transform-origin:center center;">Black</span>
<span class="t f" style="top:159px;font-size:8.9px;line-height:11px;color:#fff;right:662.30px;width:15.8px;overflow:hidden;direction:rtl;">7354</span>
<span class="t f" style="top:159px;font-size:8.9px;line-height:11px;color:#fff;right:592.34px;">$842,558.5277</span>
<span class="t f" style="top:159px;font-size:8.9px;line-height:11px;color:#fff;right:522.08px;">$487,821.9617</span>
<span class="t f" style="top:159px;font-size:8.9px;line-height:11px;color:#fff;right:451.82px;">$3,081,847.6204</span>
<span class="t f" style="top:159px;font-size:8.9px;line-height:11px;color:#fff;right:381.56px;">$1,764,277.9608</span>
<span class="t f" style="top:159px;font-size:8.9px;line-height:11px;color:#fff;right:311.30px;">$1,750,176.1353</span>
<span class="t f" style="top:159px;font-size:8.9px;line-height:11px;color:#fff;right:241.04px;">$1,005,898.6545</span>
<span class="t f" style="top:159px;font-size:8.9px;line-height:11px;color:#fff;font-weight:700;right:165.40px;transform:scaleX(1.06);transform-origin:right center;">$8,838,411.9576</span>
<span class="t f" style="top:159px;font-size:8.9px;line-height:11px;color:#fff;font-weight:700;left:613.6px;width:16.5px;overflow:hidden;">$5,0</span>
<span class="t f" style="top:181px;font-size:9.2px;line-height:11px;color:#fff;left:62.9px;transform:translateX(-50%) scaleX(1.04);transform-origin:center center;">Blue</span>
<span class="t f" style="top:181px;font-size:8.9px;line-height:11px;color:#3a3526;right:662.30px;width:15.8px;overflow:hidden;direction:rtl;">3966</span>
<span class="t f" style="top:181px;font-size:8.9px;line-height:11px;color:#3a3526;right:592.34px;">$210,776.61</span>
<span class="t f" style="top:181px;font-size:8.9px;line-height:11px;color:#3a3526;right:522.08px;">$127,880.9599</span>
<span class="t f" style="top:181px;font-size:8.9px;line-height:11px;color:#3a3526;right:451.82px;">$859,668.56</span>
<span class="t f" style="top:181px;font-size:8.9px;line-height:11px;color:#3a3526;right:381.56px;">$525,879.448</span>
<span class="t f" style="top:181px;font-size:8.9px;line-height:11px;color:#3a3526;right:311.30px;">$470,670.46</span>
<span class="t f" style="top:181px;font-size:8.9px;line-height:11px;color:#3a3526;right:241.04px;">$286,137.5732</span>
<span class="t f" style="top:181px;font-size:8.9px;line-height:11px;color:#fff;font-weight:700;right:165.40px;transform:scaleX(1.06);transform-origin:right center;">$2,279,096.28</span>
<span class="t f" style="top:181px;font-size:8.9px;line-height:11px;color:#fff;font-weight:700;left:613.6px;width:16.5px;overflow:hidden;">$1,3</span>
<span class="t f" style="top:202px;font-size:9.2px;line-height:11px;color:#fff;left:62.9px;transform:translateX(-50%) scaleX(1.04);transform-origin:center center;">Multi</span>
<span class="t f" style="top:202px;font-size:8.9px;line-height:11px;color:#fff;right:662.30px;width:15.8px;overflow:hidden;direction:rtl;">5712</span>
<span class="t f" style="top:202px;font-size:8.9px;line-height:11px;color:#fff;right:592.34px;">$13,058.96</span>
<span class="t f" style="top:202px;font-size:8.9px;line-height:11px;color:#fff;right:522.08px;">$10,055.3992</span>
<span class="t f" style="top:202px;font-size:8.9px;line-height:11px;color:#fff;right:451.82px;">$30,320.21</span>
<span class="t f" style="top:202px;font-size:8.9px;line-height:11px;color:#fff;right:381.56px;">$23,346.5617</span>
<span class="t f" style="top:202px;font-size:8.9px;line-height:11px;color:#fff;right:311.30px;">$25,756.96</span>
<span class="t f" style="top:202px;font-size:8.9px;line-height:11px;color:#fff;right:241.04px;">$19,832.8592</span>
<span class="t f" style="top:202px;font-size:8.9px;line-height:11px;color:#fff;font-weight:700;right:165.40px;transform:scaleX(1.06);transform-origin:right center;">$106,470.74</span>
<span class="t f" style="top:202px;font-size:8.9px;line-height:11px;color:#fff;font-weight:700;left:625.6px;width:4.5px;overflow:hidden;">$</span>
<span class="t f" style="top:223px;font-size:9.2px;line-height:11px;color:#fff;left:62.9px;transform:translateX(-50%) scaleX(1.04);transform-origin:center center;">NA</span>
<span class="t f" style="top:223px;font-size:8.9px;line-height:11px;color:#3a3526;right:662.30px;width:15.8px;overflow:hidden;direction:rtl;">7556</span>
<span class="t f" style="top:223px;font-size:8.9px;line-height:11px;color:#3a3526;right:592.34px;">$46,862.19</span>
<span class="t f" style="top:223px;font-size:8.9px;line-height:11px;color:#3a3526;right:522.08px;">$17,526.576</span>
<span class="t f" style="top:223px;font-size:8.9px;line-height:11px;color:#3a3526;right:451.82px;">$138,628.98</span>
<span class="t f" style="top:223px;font-size:8.9px;line-height:11px;color:#3a3526;right:381.56px;">$51,847.5049</span>
<span class="t f" style="top:223px;font-size:8.9px;line-height:11px;color:#3a3526;right:311.30px;">$103,981.88</span>
<span class="t f" style="top:223px;font-size:8.9px;line-height:11px;color:#3a3526;right:241.04px;">$38,889.4309</span>
<span class="t f" style="top:223px;font-size:8.9px;line-height:11px;color:#fff;font-weight:700;right:165.40px;transform:scaleX(1.06);transform-origin:right center;">$435,116.69</span>
<span class="t f" style="top:223px;font-size:8.9px;line-height:11px;color:#fff;font-weight:700;left:625.6px;width:4.5px;overflow:hidden;">$</span>
<span class="t f" style="top:244px;font-size:9.2px;line-height:11px;color:#fff;left:62.9px;transform:translateX(-50%) scaleX(1.04);transform-origin:center center;">Red</span>
<span class="t f" style="top:244px;font-size:8.9px;line-height:11px;color:#fff;right:662.30px;width:15.8px;overflow:hidden;direction:rtl;">5565</span>
<span class="t f" style="top:244px;font-size:8.9px;line-height:11px;color:#fff;right:592.34px;">$806,719.5312</span>
<span class="t f" style="top:244px;font-size:8.9px;line-height:11px;color:#fff;right:522.08px;">$490,160.5224</span>
<span class="t f" style="top:244px;font-size:8.9px;line-height:11px;color:#fff;right:451.82px;">$2,299,118.9544</span>
<span class="t f" style="top:244px;font-size:8.9px;line-height:11px;color:#fff;right:381.56px;">$1,397,650.5178</span>
<span class="t f" style="top:244px;font-size:8.9px;line-height:11px;color:#fff;right:311.30px;">$1,835,451.6157</span>
<span class="t f" style="top:244px;font-size:8.9px;line-height:11px;color:#fff;right:241.04px;">$1,115,019.6185</span>
<span class="t f" style="top:244px;font-size:8.9px;line-height:11px;color:#fff;font-weight:700;right:165.40px;transform:scaleX(1.06);transform-origin:right center;">$7,724,330.524</span>
<span class="t f" style="top:244px;font-size:8.9px;line-height:11px;color:#fff;font-weight:700;left:613.6px;width:16.5px;overflow:hidden;">$4,6</span>
<span class="t f" style="top:266px;font-size:9.2px;line-height:11px;color:#fff;left:62.9px;transform:translateX(-50%) scaleX(1.04);transform-origin:center center;">Silver</span>
<span class="t f" style="top:266px;font-size:8.9px;line-height:11px;color:#3a3526;right:662.30px;width:15.8px;overflow:hidden;direction:rtl;">5658</span>
<span class="t f" style="top:266px;font-size:8.9px;line-height:11px;color:#3a3526;right:592.34px;">$448,463.1468</span>
<span class="t f" style="top:266px;font-size:8.9px;line-height:11px;color:#3a3526;right:522.08px;">$244,678.4275</span>
<span class="t f" style="top:266px;font-size:8.9px;line-height:11px;color:#3a3526;right:451.82px;">$1,858,373.3488</span>
<span class="t f" style="top:266px;font-size:8.9px;line-height:11px;color:#3a3526;right:381.56px;">$1,013,079.1306</span>
<span class="t f" style="top:266px;font-size:8.9px;line-height:11px;color:#3a3526;right:311.30px;">$1,053,711.9804</span>
<span class="t f" style="top:266px;font-size:8.9px;line-height:11px;color:#3a3526;right:241.04px;">$574,014.0148</span>
<span class="t f" style="top:266px;font-size:8.9px;line-height:11px;color:#fff;font-weight:700;right:165.40px;transform:scaleX(1.06);transform-origin:right center;">$5,113,389.0816</span>
<span class="t f" style="top:266px;font-size:8.9px;line-height:11px;color:#fff;font-weight:700;left:613.6px;width:16.5px;overflow:hidden;">$2,7</span>
<span class="t f" style="top:287px;font-size:9.2px;line-height:11px;color:#fff;left:62.9px;transform:translateX(-50%) scaleX(1.04);transform-origin:center center;">White</span>
<span class="t f" style="top:287px;font-size:8.9px;line-height:11px;color:#fff;right:662.30px;width:15.8px;overflow:hidden;direction:rtl;">3415</span>
<span class="t f" style="top:287px;font-size:8.9px;line-height:11px;color:#fff;right:592.34px;">$485.46</span>
<span class="t f" style="top:287px;font-size:8.9px;line-height:11px;color:#fff;right:522.08px;">$181.5642</span>
<span class="t f" style="top:287px;font-size:8.9px;line-height:11px;color:#fff;right:451.82px;">$1,798</span>
<span class="t f" style="top:287px;font-size:8.9px;line-height:11px;color:#fff;right:381.56px;">$672.46</span>
<span class="t f" style="top:287px;font-size:8.9px;line-height:11px;color:#fff;right:311.30px;">$1,204.66</span>
<span class="t f" style="top:287px;font-size:8.9px;line-height:11px;color:#fff;right:241.04px;">$450.5482</span>
<span class="t f" style="top:287px;font-size:8.9px;line-height:11px;color:#fff;font-weight:700;right:165.40px;transform:scaleX(1.06);transform-origin:right center;">$5,106.32</span>
<span class="t f" style="top:308px;font-size:9.2px;line-height:11px;color:#fff;left:62.9px;transform:translateX(-50%) scaleX(1.04);transform-origin:center center;">Yellow</span>
<span class="t f" style="top:308px;font-size:8.9px;line-height:11px;color:#3a3526;right:662.30px;width:15.8px;overflow:hidden;direction:rtl;">9569</span>
<span class="t f" style="top:308px;font-size:8.9px;line-height:11px;color:#3a3526;right:592.34px;">$489,046.4675</span>
<span class="t f" style="top:308px;font-size:8.9px;line-height:11px;color:#3a3526;right:522.08px;">$309,645.045</span>
<span class="t f" style="top:308px;font-size:8.9px;line-height:11px;color:#3a3526;right:451.82px;">$1,638,221.6075</span>
<span class="t f" style="top:308px;font-size:8.9px;line-height:11px;color:#3a3526;right:381.56px;">$1,031,655.3068</span>
<span class="t f" style="top:308px;font-size:8.9px;line-height:11px;color:#3a3526;right:311.30px;">$1,199,127.1675</span>
<span class="t f" style="top:308px;font-size:8.9px;line-height:11px;color:#3a3526;right:241.04px;">$759,314.4078</span>
<span class="t f" style="top:308px;font-size:8.9px;line-height:11px;color:#fff;font-weight:700;right:165.40px;transform:scaleX(1.06);transform-origin:right center;">$4,856,755.6275</span>
<span class="t f" style="top:308px;font-size:8.9px;line-height:11px;color:#fff;font-weight:700;left:613.6px;width:16.5px;overflow:hidden;">$3,0</span>
<span class="t f" style="top:330px;font-size:9.2px;line-height:11px;color:#fff;font-weight:700;left:62.9px;transform:translateX(-50%) scaleX(1.04);transform-origin:center center;">Total</span>
<span class="t f" style="top:329px;font-size:8.9px;line-height:11px;color:#fff;font-weight:700;right:662.30px;width:15.8px;overflow:hidden;direction:rtl;">795</span>
<span class="t f" style="top:329px;font-size:8.9px;line-height:11px;color:#fff;font-weight:700;right:592.34px;transform:scaleX(1.06);transform-origin:right center;">$2,857,970.8932</span>
<span class="t f" style="top:329px;font-size:8.9px;line-height:11px;color:#fff;font-weight:700;right:522.08px;transform:scaleX(1.06);transform-origin:right center;">$1,687,950.4559</span>
<span class="t f" style="top:329px;font-size:8.9px;line-height:11px;color:#fff;font-weight:700;right:451.82px;transform:scaleX(1.06);transform-origin:right center;">$9,907,977.2811</span>
<span class="t f" style="top:329px;font-size:8.9px;line-height:11px;color:#fff;font-weight:700;right:381.56px;transform:scaleX(1.06);transform-origin:right center;">$5,808,408.8906</span>
<span class="t f" style="top:329px;font-size:8.9px;line-height:11px;color:#fff;font-weight:700;right:311.30px;transform:scaleX(1.06);transform-origin:right center;">$6,440,080.8589</span>
<span class="t f" style="top:329px;font-size:8.9px;line-height:11px;color:#fff;font-weight:700;right:241.04px;transform:scaleX(1.06);transform-origin:right center;">$3,799,557.1071</span>
<span class="t f" style="top:329px;font-size:8.9px;line-height:11px;color:#fff;font-weight:700;right:165.40px;transform:scaleX(1.06);transform-origin:right center;">$29,358,677.2207</span>
<span class="t f" style="top:329px;font-size:8.9px;line-height:11px;color:#fff;font-weight:700;left:609.2px;width:20.9px;overflow:hidden;">$17,2</span>
<span class="t s" style="top:97px;font-size:8.2px;line-height:10px;color:#ffffff;font-weight:700;left:647.3px;transform:scaleX(0.9375);transform-origin:left center;">VISUALIZATIONS</span>
<span class="t s" style="top:215px;font-size:8.5px;line-height:10px;color:#a4a4ae;left:663.7px;transform:scaleX(0.8278);transform-origin:left center;">Search</span>
<span class="t s" style="top:235px;font-size:8px;line-height:10px;color:#f3f3f3;left:655.9px;transform:scaleX(0.8723);transform-origin:left center;">Subtotals</span>
<span class="t s" style="top:133px;font-size:8.2px;line-height:10px;color:#fff;font-weight:700;left:758.2px;transform:translateX(-50%) scaleX(0.927) rotate(90deg);transform-origin:center center;">FIELDS</span>
<span class="t s" style="top:448px;font-size:7.3px;line-height:9px;color:#666;left:58.4px;transform:scaleX(0.8979);transform-origin:left center;">RIBBON CHART</span>
<span class="t s" style="top:448px;font-size:7.3px;line-height:9px;color:#666;left:132.3px;transform:scaleX(0.8903);transform-origin:left center;">AREA CHART</span>
<span class="t s" style="top:448px;font-size:7.3px;line-height:9px;color:#666;left:198.3px;transform:scaleX(0.8846);transform-origin:left center;">CARD</span>
<span class="t s" style="top:448px;font-size:7.3px;line-height:9px;color:#666;left:241.1px;transform:scaleX(0.9312);transform-origin:left center;">MULTI-ROW CARD</span>
<span class="t s" style="top:448px;font-size:7.3px;line-height:9px;color:#666;left:325.3px;transform:scaleX(0.8327);transform-origin:left center;">TABLE</span>
<span class="t s" style="top:448px;font-size:7.3px;line-height:9px;color:#666;left:368.7px;transform:scaleX(0.8405);transform-origin:left center;">TABLE 1</span>
<span class="t s" style="top:448px;font-size:7.3px;line-height:9px;color:#666;left:416.8px;transform:scaleX(0.8824);transform-origin:left center;">TABLE 2</span>
<span class="t s" style="top:448px;font-size:7.3px;line-height:9px;color:#666;left:466.7px;transform:scaleX(0.9364);transform-origin:left center;">Duplicate of TABLE 1</span>
<span class="t s" style="top:256px;font-size:7.8px;line-height:9px;color:#f3f3f3;left:645.4px;transform:scaleX(0.8564);transform-origin:left center;">Row subt...</span>
<span class="t s" style="top:256px;font-size:7.8px;line-height:9px;color:#f3f3f3;left:701.8px;transform:scaleX(0.9225);transform-origin:left center;">On</span>
<span class="t s" style="top:277px;font-size:7.8px;line-height:9px;color:#f3f3f3;left:645.4px;transform:scaleX(0.8833);transform-origin:left center;">Column ...</span>
<span class="t s" style="top:277px;font-size:7.8px;line-height:9px;color:#f3f3f3;left:701.8px;transform:scaleX(0.9225);transform-origin:left center;">On</span>
<span class="t s" style="top:298px;font-size:7.8px;line-height:9px;color:#f3f3f3;left:645.4px;transform:scaleX(0.8912);transform-origin:left center;">Font color</span>
<span class="t s" style="top:319px;font-size:7.8px;line-height:9px;color:#f3f3f3;left:645.4px;transform:scaleX(0.8829);transform-origin:left center;">Font fam...</span>
<span class="t s" style="top:319px;font-size:7.8px;line-height:9px;color:#fff;left:690.8px;transform:scaleX(0.8484);transform-origin:left center;">Cambria</span>
<span class="t s" style="top:341px;font-size:7.8px;line-height:9px;color:#f3f3f3;left:645.4px;transform:scaleX(0.8997);transform-origin:left center;">Background color</span>
<span class="t s" style="top:362px;font-size:7.8px;line-height:9px;color:#f3f3f3;left:645.4px;transform:scaleX(0.8503);transform-origin:left center;">Text size</span>
<span class="t s" style="top:362px;font-size:7.8px;line-height:9px;color:#fff;left:708.8px;transform:scaleX(0.7827);transform-origin:left center;">13</span>
<span class="t s" style="top:383px;font-size:7.8px;line-height:9px;color:#f3f3f3;left:645.4px;transform:scaleX(0.9065);transform-origin:left center;">Apply to ...</span>
<span class="t s" style="top:383px;font-size:7.8px;line-height:9px;color:#f3f3f3;left:701.8px;transform:scaleX(0.9352);transform-origin:left center;">Off</span>
<span class="t s" style="top:404px;font-size:7.8px;line-height:9px;color:#f3f3f3;left:645.4px;transform:scaleX(0.8564);transform-origin:left center;">Row subt...</span>
<span class="t s" style="top:404px;font-size:7.8px;line-height:9px;color:#fff;left:690.8px;transform:scaleX(0.8348);transform-origin:left center;">Top</span>
<span class="t s" style="top:425px;font-size:7.8px;line-height:9px;color:#f3f3f3;left:645.4px;transform:scaleX(0.8614);transform-origin:left center;">Per row l...</span>
<span class="t s" style="top:425px;font-size:7.8px;line-height:9px;color:#f3f3f3;left:701.8px;transform:scaleX(0.9352);transform-origin:left center;">Off</span>
<span class="t s" style="top:446px;font-size:7.8px;line-height:9px;color:#f3f3f3;left:645.4px;transform:scaleX(0.8431);transform-origin:left center;">Per colu...</span>
<span class="t s" style="top:446px;font-size:7.8px;line-height:9px;color:#f3f3f3;left:701.8px;transform:scaleX(0.9352);transform-origin:left center;">Off</span>
<span class="t s" style="top:7px;font-size:7px;line-height:8px;color:#3d3d55;left:225.1px;transform:scaleX(0.97);transform-origin:left center;">Visual tools</span>
<span class="t s" style="top:6px;font-size:7px;line-height:8px;color:#333;left:294.5px;transform:scaleX(0.9504);transform-origin:left center;">Reports 2 - Power BI Desktop</span>
<span class="t s" style="top:22px;font-size:7px;line-height:8px;color:#ffffff;left:11.3px;transform:scaleX(0.9307);transform-origin:left center;">File</span>
<span class="t s" style="top:22px;font-size:7px;line-height:8px;color:#333333;left:46.9px;transform:scaleX(0.9097);transform-origin:left center;">Home</span>
<span class="t s" style="top:22px;font-size:7px;line-height:8px;color:#333333;left:86.5px;transform:scaleX(0.9504);transform-origin:left center;">View</span>
<span class="t s" style="top:22px;font-size:7px;line-height:8px;color:#333333;left:118px;transform:scaleX(1.0239);transform-origin:left center;">Modeling</span>
<span class="t s" style="top:22px;font-size:7px;line-height:8px;color:#333333;left:170px;transform:scaleX(0.951);transform-origin:left center;">Help</span>
<span class="t s" style="top:22px;font-size:7px;line-height:8px;color:#333333;left:207.5px;transform:scaleX(0.9381);transform-origin:left center;">Format</span>
<span class="t s" style="top:22px;font-size:7px;line-height:8px;color:#333333;left:245.6px;transform:scaleX(0.9759);transform-origin:left center;">Data / Drill</span>
<span class="t s" style="top:22px;font-size:7px;line-height:8px;color:#333333;left:712.2px;transform:scaleX(0.995);transform-origin:left center;">Sign in</span>
<span class="t s" style="top:77px;font-size:7px;line-height:8px;color:#4a4a4a;left:30.8px;transform:scaleX(0.9877);transform-origin:left center;">Clipboard</span>
<span class="t s" style="top:77px;font-size:7px;line-height:8px;color:#4a4a4a;left:147.6px;transform:scaleX(0.943);transform-origin:left center;">External data</span>
<span class="t s" style="top:77px;font-size:7px;line-height:8px;color:#4a4a4a;left:297.3px;transform:scaleX(0.9534);transform-origin:left center;">Insert</span>
<span class="t s" style="top:77px;font-size:7px;line-height:8px;color:#4a4a4a;left:382px;transform:scaleX(0.9248);transform-origin:left center;">Custom visuals</span>
<span class="t s" style="top:77px;font-size:7px;line-height:8px;color:#4a4a4a;left:444.2px;transform:scaleX(0.9707);transform-origin:left center;">Relationships</span>
<span class="t s" style="top:77px;font-size:7px;line-height:8px;color:#4a4a4a;left:512.3px;transform:scaleX(0.9544);transform-origin:left center;">Calculations</span>
<span class="t s" style="top:77px;font-size:7px;line-height:8px;color:#4a4a4a;left:579px;transform:scaleX(0.9097);transform-origin:left center;">Share</span>
<span class="t s" style="top:58px;font-size:7px;line-height:8px;color:#333333;left:7.8px;transform:scaleX(0.8545);transform-origin:left center;">Paste</span>
<span class="t s" style="top:38px;font-size:7px;line-height:8px;color:#333333;left:41.4px;transform:scaleX(0.9352);transform-origin:left center;">Cut</span>
<span class="t s" style="top:51px;font-size:7px;line-height:8px;color:#333333;left:41.4px;transform:scaleX(0.93);transform-origin:left center;">Copy</span>
<span class="t s" style="top:64px;font-size:7px;line-height:8px;color:#333333;left:41.4px;transform:scaleX(0.9461);transform-origin:left center;">Format Painter</span>
<span class="t s" style="top:58px;font-size:7px;line-height:8px;color:#333333;left:100.8px;transform:scaleX(0.9029);transform-origin:left center;">Get</span>
<span class="t s" style="top:65px;font-size:7px;line-height:8px;color:#333333;left:97px;transform:scaleX(0.8988);transform-origin:left center;">Data</span>
<span class="t s" style="top:58px;font-size:7px;line-height:8px;color:#333333;left:123.8px;transform:scaleX(0.8924);transform-origin:left center;">Recent</span>
<span class="t s" style="top:65px;font-size:7px;line-height:8px;color:#333333;left:120px;transform:scaleX(0.8526);transform-origin:left center;">Sources</span>
<span class="t s" style="top:58px;font-size:7px;line-height:8px;color:#333333;left:154.1px;transform:scaleX(0.9322);transform-origin:left center;">Enter</span>
<span class="t s" style="top:65px;font-size:7px;line-height:8px;color:#333333;left:154.9px;transform:scaleX(0.9124);transform-origin:left center;">Data</span>
<span class="t s" style="top:58px;font-size:7px;line-height:8px;color:#333333;left:188.2px;transform:scaleX(0.9534);transform-origin:left center;">Edit</span>
<span class="t s" style="top:65px;font-size:7px;line-height:8px;color:#333333;left:180.5px;transform:scaleX(0.93);transform-origin:left center;">Queries</span>
<span class="t s" style="top:58px;font-size:7px;line-height:8px;color:#333333;left:215.8px;transform:scaleX(0.9096);transform-origin:left center;">Refresh</span>
<span class="t s" style="top:58px;font-size:7px;line-height:8px;color:#333333;left:252.2px;transform:scaleX(0.8919);transform-origin:left center;">New</span>
<span class="t s" style="top:65px;font-size:7px;line-height:8px;color:#333333;left:249.1px;transform:scaleX(0.8741);transform-origin:left center;">Page</span>
<span class="t s" style="top:58px;font-size:7px;line-height:8px;color:#333333;left:276.7px;transform:scaleX(0.9275);transform-origin:left center;">New</span>
<span class="t s" style="top:65px;font-size:7px;line-height:8px;color:#333333;left:274.7px;transform:scaleX(0.9286);transform-origin:left center;">Visual</span>
<span class="t s" style="top:58px;font-size:7px;line-height:8px;color:#333333;left:297.3px;">Buttons</span>
<span class="t s" style="top:38px;font-size:7px;line-height:8px;color:#333333;left:336.1px;transform:scaleX(0.9126);transform-origin:left center;">Text box</span>
<span class="t s" style="top:51px;font-size:7px;line-height:8px;color:#333333;left:336.1px;transform:scaleX(0.904);transform-origin:left center;">Image</span>
<span class="t s" style="top:64px;font-size:7px;line-height:8px;color:#333333;left:336.1px;transform:scaleX(0.8968);transform-origin:left center;">Shapes</span>
<span class="t s" style="top:58px;font-size:7px;line-height:8px;color:#333333;left:383.7px;transform:scaleX(0.9178);transform-origin:left center;">From</span>
<span class="t s" style="top:65px;font-size:7px;line-height:8px;color:#333333;left:373px;transform:scaleX(0.9544);transform-origin:left center;">Marketplace</span>
<span class="t s" style="top:58px;font-size:7px;line-height:8px;color:#333333;left:415.8px;transform:scaleX(0.9239);transform-origin:left center;">From</span>
<span class="t s" style="top:65px;font-size:7px;line-height:8px;color:#333333;left:418.6px;transform:scaleX(0.8244);transform-origin:left center;">File</span>
<span class="t s" style="top:58px;font-size:7px;line-height:8px;color:#333333;left:452.2px;transform:scaleX(0.9685);transform-origin:left center;">Manage</span>
<span class="t s" style="top:65px;font-size:7px;line-height:8px;color:#333333;left:444.2px;transform:scaleX(0.9707);transform-origin:left center;">Relationships</span>
<span class="t s" style="top:38px;font-size:7px;line-height:8px;color:#333333;left:506.1px;transform:scaleX(0.9447);transform-origin:left center;">New Measure</span>
<span class="t s" style="top:51px;font-size:7px;line-height:8px;color:#333333;left:506.1px;transform:scaleX(0.9681);transform-origin:left center;">New Column</span>
<span class="t s" style="top:64px;font-size:7px;line-height:8px;color:#333333;left:506.1px;transform:scaleX(0.9456);transform-origin:left center;">New Quick Measure</span>
<span class="t s" style="top:58px;font-size:7px;line-height:8px;color:#333333;left:576.3px;transform:scaleX(0.9448);transform-origin:left center;">Publish</span>
</body></html>
